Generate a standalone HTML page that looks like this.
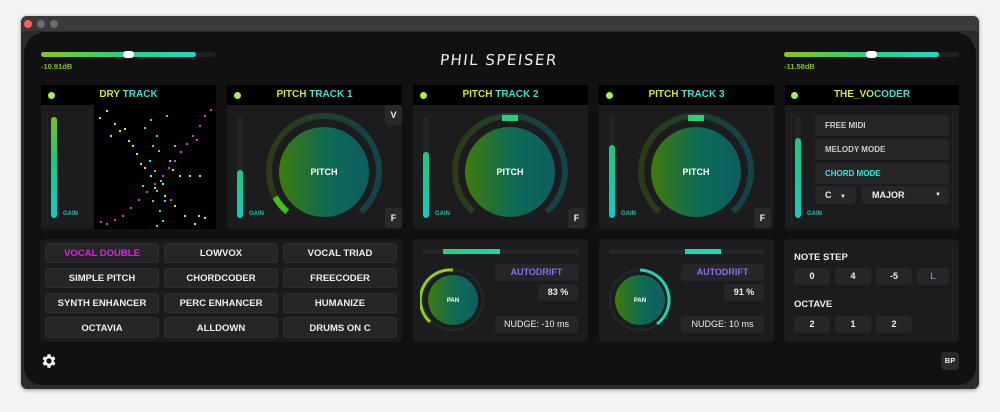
<!DOCTYPE html>
<html><head><meta charset="utf-8"><style>
*{box-sizing:border-box;margin:0;padding:0}
body{width:1000px;height:412px;background:#f4f4f4;position:relative;overflow:hidden;font-family:"Liberation Sans",sans-serif;font-weight:bold;color:#eee}
.a{position:absolute}
.win{left:21px;top:16px;width:958px;height:373px;background:#2b2b2d;border-radius:6px;box-shadow:0 1px 4px rgba(0,0,0,.4)}
.tl{width:8px;height:8px;border-radius:50%;top:20px}
.inner{left:24px;top:32px;width:952px;height:353px;background:#111113;border-radius:22px 22px 18px 18px}
.hdr{background:#000;height:20px;font-size:10px;text-align:center;line-height:20px}
.g{background:linear-gradient(90deg,#d4f02e 35%,#3fe2d6 50%);-webkit-background-clip:text;background-clip:text;color:transparent}
.dot{width:7px;height:7px;border-radius:50%;background:#a8f050;top:7px;left:8px}
.body{background:#1c1c1e}
.btn{background:#262628;border-radius:3px;font-size:9.5px;text-align:center;color:#eee}
.gain{font-size:6px;color:#2bb8b0}
.track{width:6px;border-radius:3px;background:#242426}
.fill{width:6px;border-radius:3px;background:linear-gradient(#1fc77a,#18c9c3)}
.sm{width:17px;height:20px;background:#29292b;border-radius:3px;font-size:9px;text-align:center;line-height:20px}
</style></head><body>
<div class="a win"></div>
<div class="a" style="left:21px;top:16px;width:958px;height:15px;background:#3a3a3c;border-radius:6px 6px 0 0"></div>
<div class="a tl" style="left:24px;background:#fe5f57"></div>
<div class="a tl" style="left:37px;background:#6b6b6b"></div>
<div class="a tl" style="left:50px;background:#6b6b6b"></div>
<div class="a inner"></div>

<div class="a" style="left:41px;top:52px;width:175px;height:5px;background:#202022;border-radius:3px"></div>
<div class="a" style="left:41px;top:52px;width:155px;height:5px;border-radius:3px;background:linear-gradient(90deg,#8fc41e,#27d07a 50%,#22d6c4)"></div>
<div class="a" style="left:123px;top:51px;width:11px;height:7px;background:#fff;border-radius:3px"></div>
<div class="a" style="left:41px;top:62px;font-size:7.5px;color:#7dc21e">-10.91dB</div>
<div class="a" style="left:784px;top:52px;width:175px;height:5px;background:#202022;border-radius:3px"></div>
<div class="a" style="left:784px;top:52px;width:155px;height:5px;border-radius:3px;background:linear-gradient(90deg,#8fc41e,#27d07a 50%,#22d6c4)"></div>
<div class="a" style="left:866px;top:51px;width:11px;height:7px;background:#fff;border-radius:3px"></div>
<div class="a" style="left:784px;top:62px;font-size:7.5px;color:#7dc21e">-11.58dB</div>
<div class="a" style="left:440px;top:51px;width:122px;font-family:'DejaVu Sans',sans-serif;font-weight:normal;font-size:15px;letter-spacing:1.5px;color:#eee;transform:skewX(-6deg);-webkit-text-stroke:0">PHIL SPEISER</div>

<div class="a body" style="left:41px;top:85px;width:175px;height:144px;border-radius:3px"></div>
<div class="a hdr" style="left:41px;top:85px;width:175px"><span class="g">DRY TRACK</span></div>
<div class="a dot" style="left:48px;top:92px"></div>
<div class="a fill" style="left:51px;top:117px;height:101px;background:linear-gradient(#7dc21e,#1fc77a 40%,#18c9c3)"></div>
<div class="a gain" style="left:63px;top:211px">GAIN</div>
<div class="a" style="left:94px;top:105px;width:122px;height:124px;background:#000"></div>
<svg class="a" style="left:94px;top:105px" width="122" height="124">
<g fill="#d4e83a"><rect x="5" y="12" width="2" height="2"/><rect x="12" y="5" width="2" height="2"/><rect x="20" y="18" width="2" height="2"/><rect x="25" y="25" width="2" height="2"/><rect x="30" y="23" width="2" height="2"/><rect x="34" y="35" width="2" height="2"/><rect x="38" y="40" width="2" height="2"/><rect x="42" y="48" width="2" height="2"/><rect x="50" y="62" width="2" height="2"/><rect x="56" y="70" width="2" height="2"/><rect x="60" y="82" width="2" height="2"/><rect x="70" y="90" width="2" height="2"/><rect x="80" y="100" width="2" height="2"/><rect x="90" y="110" width="2" height="2"/><rect x="100" y="118" width="2" height="2"/><rect x="110" y="112" width="2" height="2"/><rect x="85" y="70" width="2" height="2"/><rect x="95" y="70" width="2" height="2"/><rect x="105" y="70" width="2" height="2"/><rect x="46" y="58" width="2" height="2"/><rect x="16" y="30" width="2" height="2"/><rect x="68" y="78" width="2" height="2"/><rect x="78" y="64" width="2" height="2"/><rect x="104" y="110" width="2" height="2"/></g>
<g fill="#35d8e0"><rect x="50" y="22" width="2" height="2"/><rect x="56" y="14" width="2" height="2"/><rect x="62" y="30" width="2" height="2"/><rect x="58" y="40" width="2" height="2"/><rect x="64" y="45" width="2" height="2"/><rect x="55" y="55" width="2" height="2"/><rect x="60" y="65" width="2" height="2"/><rect x="66" y="75" width="2" height="2"/><rect x="62" y="85" width="2" height="2"/><rect x="58" y="95" width="2" height="2"/><rect x="65" y="105" width="2" height="2"/><rect x="68" y="115" width="2" height="2"/><rect x="62" y="120" width="2" height="2"/><rect x="72" y="10" width="2" height="2"/><rect x="75" y="55" width="2" height="2"/><rect x="80" y="40" width="2" height="2"/><rect x="70" y="95" width="2" height="2"/><rect x="48" y="80" width="2" height="2"/></g>
<g fill="#e030e0"><rect x="110" y="10" width="2" height="2"/><rect x="105" y="20" width="2" height="2"/><rect x="98" y="30" width="2" height="2"/><rect x="92" y="38" width="2" height="2"/><rect x="86" y="46" width="2" height="2"/><rect x="80" y="55" width="2" height="2"/><rect x="74" y="62" width="2" height="2"/><rect x="68" y="70" width="2" height="2"/><rect x="60" y="78" width="2" height="2"/><rect x="52" y="86" width="2" height="2"/><rect x="44" y="94" width="2" height="2"/><rect x="36" y="102" width="2" height="2"/><rect x="28" y="110" width="2" height="2"/><rect x="20" y="114" width="2" height="2"/><rect x="12" y="118" width="2" height="2"/><rect x="6" y="116" width="2" height="2"/><rect x="116" y="4" width="2" height="2"/><rect x="102" y="34" width="2" height="2"/><rect x="76" y="94" width="2" height="2"/></g>
</svg>

<svg width="0" height="0" style="position:absolute"><defs>
<linearGradient id="kg" x1="0" x2="1"><stop offset="0" stop-color="#3e7b0c"/><stop offset=".55" stop-color="#0d6a55"/><stop offset="1" stop-color="#0e5e60"/></linearGradient>
<linearGradient id="rg" x1="0" x2="1"><stop offset="0" stop-color="#2c3a16"/><stop offset="1" stop-color="#124448"/></linearGradient>
</defs></svg>

<div class="a body" style="left:227px;top:85px;width:175px;height:144px;border-radius:3px"></div>
<div class="a hdr" style="left:227px;top:85px;width:175px"><span class="g">PITCH TRACK 1</span></div>
<div class="a dot" style="left:234px;top:92px"></div>
<div class="a track" style="left:237px;top:117px;height:101px"></div>
<div class="a fill" style="left:237px;top:170px;height:48px"></div>
<div class="a gain" style="left:249px;top:211px">GAIN</div>
<svg class="a" style="left:264px;top:112px" width="120" height="120"><path d="M23.2 99.8 A55 55 0 1 1 96.8 99.8" fill="none" stroke="url(#rg)" stroke-width="6"/><path d="M23.2 99.8 A55 55 0 0 1 11.1 85.1" fill="none" stroke="#3fbf1a" stroke-width="6"/><circle cx="60" cy="60" r="45" fill="url(#kg)"/><text x="60" y="63" text-anchor="middle" font-size="9" font-family="Liberation Sans" font-weight="bold" fill="#fff">PITCH</text></svg>
<div class="a sm" style="left:385px;top:105px">V</div>
<div class="a sm" style="left:385px;top:208px">F</div>

<div class="a body" style="left:413px;top:85px;width:175px;height:144px;border-radius:3px"></div>
<div class="a hdr" style="left:413px;top:85px;width:175px"><span class="g">PITCH TRACK 2</span></div>
<div class="a dot" style="left:420px;top:92px"></div>
<div class="a track" style="left:423px;top:117px;height:101px"></div>
<div class="a fill" style="left:423px;top:152px;height:66px"></div>
<div class="a gain" style="left:435px;top:211px">GAIN</div>
<svg class="a" style="left:450px;top:112px" width="120" height="120"><path d="M23.2 99.8 A55 55 0 1 1 96.8 99.8" fill="none" stroke="url(#rg)" stroke-width="6"/><rect x="52" y="3" width="16" height="6" fill="#27d07a"/><circle cx="60" cy="60" r="45" fill="url(#kg)"/><text x="60" y="63" text-anchor="middle" font-size="9" font-family="Liberation Sans" font-weight="bold" fill="#fff">PITCH</text></svg>
<div class="a sm" style="left:568px;top:208px">F</div>

<div class="a body" style="left:599px;top:85px;width:175px;height:144px;border-radius:3px"></div>
<div class="a hdr" style="left:599px;top:85px;width:175px"><span class="g">PITCH TRACK 3</span></div>
<div class="a dot" style="left:606px;top:92px"></div>
<div class="a track" style="left:609px;top:117px;height:101px"></div>
<div class="a fill" style="left:609px;top:145px;height:73px"></div>
<div class="a gain" style="left:621px;top:211px">GAIN</div>
<svg class="a" style="left:636px;top:112px" width="120" height="120"><path d="M23.2 99.8 A55 55 0 1 1 96.8 99.8" fill="none" stroke="url(#rg)" stroke-width="6"/><rect x="52" y="3" width="16" height="6" fill="#27d07a"/><circle cx="60" cy="60" r="45" fill="url(#kg)"/><text x="60" y="63" text-anchor="middle" font-size="9" font-family="Liberation Sans" font-weight="bold" fill="#fff">PITCH</text></svg>
<div class="a sm" style="left:754px;top:208px">F</div>

<div class="a body" style="left:785px;top:85px;width:174px;height:144px;border-radius:3px"></div>
<div class="a hdr" style="left:785px;top:85px;width:174px"><span class="g" style="background:linear-gradient(90deg,#d4f02e 45%,#3fe2d6 60%);-webkit-background-clip:text;background-clip:text">THE_VOCODER</span></div>
<div class="a dot" style="left:791px;top:92px"></div>
<div class="a track" style="left:795px;top:117px;height:101px"></div>
<div class="a fill" style="left:795px;top:138px;height:80px"></div>
<div class="a gain" style="left:807px;top:211px">GAIN</div>
<div class="a btn" style="left:815px;top:115px;width:134px;height:21px;line-height:21px;text-align:left;padding-left:10px;font-size:8px;color:#ccc">FREE MIDI</div>
<div class="a btn" style="left:815px;top:139px;width:134px;height:21px;line-height:21px;text-align:left;padding-left:10px;font-size:8px;color:#ccc">MELODY MODE</div>
<div class="a btn" style="left:815px;top:163px;width:134px;height:21px;line-height:21px;text-align:left;padding-left:10px;font-size:8px;color:#2ee6e6">CHORD MODE</div>
<div class="a btn" style="left:815px;top:186px;width:41px;height:18px;line-height:18px;text-align:left;padding-left:10px;font-size:9px">C <span style="font-size:6px;margin-left:6px">▼</span></div>
<div class="a btn" style="left:862px;top:186px;width:87px;height:18px;line-height:18px;text-align:left;padding-left:10px;font-size:9px">MAJOR<span style="font-size:6px;position:absolute;right:8px">▼</span></div>

<div class="a" style="left:40px;top:239px;width:362px;height:103px;background:#1a1a1c;border-radius:4px"></div>
<div class="a btn" style="left:45px;top:243px;width:114px;height:20px;line-height:20px;color:#e020e0;border:1px solid #2e2e30">VOCAL DOUBLE</div>
<div class="a btn" style="left:164px;top:243px;width:114px;height:20px;line-height:20px;border:1px solid #2e2e30">LOWVOX</div>
<div class="a btn" style="left:283px;top:243px;width:114px;height:20px;line-height:20px;border:1px solid #2e2e30">VOCAL TRIAD</div>
<div class="a btn" style="left:45px;top:268px;width:114px;height:20px;line-height:20px;border:1px solid #2e2e30">SIMPLE PITCH</div>
<div class="a btn" style="left:164px;top:268px;width:114px;height:20px;line-height:20px;border:1px solid #2e2e30">CHORDCODER</div>
<div class="a btn" style="left:283px;top:268px;width:114px;height:20px;line-height:20px;border:1px solid #2e2e30">FREECODER</div>
<div class="a btn" style="left:45px;top:293px;width:114px;height:20px;line-height:20px;border:1px solid #2e2e30">SYNTH ENHANCER</div>
<div class="a btn" style="left:164px;top:293px;width:114px;height:20px;line-height:20px;border:1px solid #2e2e30">PERC ENHANCER</div>
<div class="a btn" style="left:283px;top:293px;width:114px;height:20px;line-height:20px;border:1px solid #2e2e30">HUMANIZE</div>
<div class="a btn" style="left:45px;top:317px;width:114px;height:21px;line-height:21px;border:1px solid #2e2e30">OCTAVIA</div>
<div class="a btn" style="left:164px;top:317px;width:114px;height:21px;line-height:21px;border:1px solid #2e2e30">ALLDOWN</div>
<div class="a btn" style="left:283px;top:317px;width:114px;height:21px;line-height:21px;border:1px solid #2e2e30">DRUMS ON C</div>

<div class="a body" style="left:413px;top:239px;width:175px;height:103px;border-radius:4px"></div>
<div class="a" style="left:423px;top:249px;width:155px;height:5px;background:#262628"></div>
<div class="a" style="left:443px;top:249px;width:57px;height:5px;background:linear-gradient(90deg,#27d07a,#24d3a8)"></div>
<svg class="a" style="left:420px;top:267px" width="66" height="66"><circle cx="33" cy="33" r="30" fill="none" stroke="#1d2c28" stroke-width="2"/><path d="M10 55 A30 30 0 0 1 33 3" fill="none" stroke="#8fcf1e" stroke-width="3"/><circle cx="33" cy="33" r="25" fill="url(#kg)"/><text x="33" y="35" text-anchor="middle" font-size="6" font-family="Liberation Sans" font-weight="bold" fill="#fff">PAN</text></svg>
<div class="a btn" style="left:495px;top:264px;width:83px;height:17px;line-height:17px;color:#8a6cf0;font-size:9px">AUTODRIFT</div>
<div class="a btn" style="left:538px;top:284px;width:40px;height:17px;line-height:17px;font-size:9px">83 %</div>
<div class="a btn" style="left:495px;top:316px;width:83px;height:17px;line-height:17px;font-size:9px;font-weight:normal">NUDGE: -10 ms</div>

<div class="a body" style="left:599px;top:239px;width:175px;height:103px;border-radius:4px"></div>
<div class="a" style="left:609px;top:249px;width:155px;height:5px;background:#262628"></div>
<div class="a" style="left:685px;top:249px;width:36px;height:5px;background:#22d6b4"></div>
<svg class="a" style="left:607px;top:267px" width="66" height="66"><circle cx="33" cy="33" r="30" fill="none" stroke="#1d2c28" stroke-width="2"/><path d="M33 3 A30 30 0 0 1 50 57" fill="none" stroke="#22d0b8" stroke-width="3"/><circle cx="33" cy="33" r="25" fill="url(#kg)"/><text x="33" y="35" text-anchor="middle" font-size="6" font-family="Liberation Sans" font-weight="bold" fill="#fff">PAN</text></svg>
<div class="a btn" style="left:681px;top:264px;width:83px;height:17px;line-height:17px;color:#8a6cf0;font-size:9px">AUTODRIFT</div>
<div class="a btn" style="left:724px;top:284px;width:40px;height:17px;line-height:17px;font-size:9px">91 %</div>
<div class="a btn" style="left:681px;top:316px;width:83px;height:17px;line-height:17px;font-size:9px;font-weight:normal">NUDGE: 10 ms</div>

<div class="a body" style="left:784px;top:239px;width:175px;height:103px;border-radius:4px"></div>
<div class="a" style="left:794px;top:252px;font-size:9.5px">NOTE STEP</div>
<div class="a btn" style="left:794px;top:268px;width:36px;height:17px;line-height:17px;font-size:9px">0</div>
<div class="a btn" style="left:835px;top:268px;width:36px;height:17px;line-height:17px;font-size:9px">4</div>
<div class="a btn" style="left:876px;top:268px;width:36px;height:17px;line-height:17px;font-size:9px">-5</div>
<div class="a btn" style="left:917px;top:268px;width:32px;height:17px;line-height:17px;font-size:9px;color:#8a6cf0">L</div>
<div class="a" style="left:794px;top:299px;font-size:9.5px">OCTAVE</div>
<div class="a btn" style="left:794px;top:316px;width:36px;height:17px;line-height:17px;font-size:9px">2</div>
<div class="a btn" style="left:835px;top:316px;width:36px;height:17px;line-height:17px;font-size:9px">1</div>
<div class="a btn" style="left:876px;top:316px;width:36px;height:17px;line-height:17px;font-size:9px">2</div>

<svg class="a" style="left:40px;top:352px" width="18" height="18" viewBox="0 0 24 24"><path fill="#fff" d="M19.4 13a7.5 7.5 0 0 0 0-2l2.1-1.6-2-3.5-2.5 1a7 7 0 0 0-1.7-1L15 3h-4l-.4 2.9a7 7 0 0 0-1.7 1l-2.5-1-2 3.5L6.6 11a7.5 7.5 0 0 0 0 2l-2.1 1.6 2 3.5 2.5-1a7 7 0 0 0 1.7 1L11 21h4l.4-2.9a7 7 0 0 0 1.7-1l2.5 1 2-3.5zM13 15.5a3.5 3.5 0 1 1 0-7 3.5 3.5 0 0 1 0 7z" transform="translate(-1 0)"/></svg>
<div class="a" style="left:941px;top:352px;width:18px;height:18px;background:#2a2a2c;border-radius:4px;font-size:7.5px;text-align:center;line-height:18px">BP</div>
</body></html>
